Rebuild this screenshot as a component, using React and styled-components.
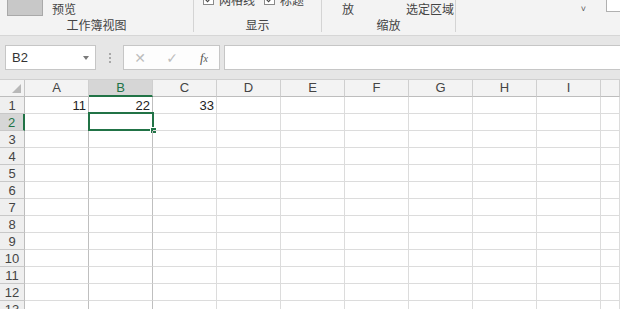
import React from "react";
import styled, { createGlobalStyle } from "styled-components";

const Global = createGlobalStyle`
  html, body { margin: 0; padding: 0; }
  body { font-family: "Liberation Sans", "Noto Sans CJK SC", sans-serif; background: #e6e6e6; }
  * { box-sizing: border-box; }
`;

const Page = styled.div`
  width: 100%;
  height: 309px;
  overflow: hidden;
  display: flex;
  flex-direction: column;
`;

const Ribbon = styled.div`
  height: 36px;
  flex: none;
  display: flex;
  background: #f3f3f3;
  border-bottom: 1px solid #d6d6d6;
  overflow: hidden;
  font-family: "Noto Sans CJK SC", sans-serif;
  font-size: 12px;
  color: #444;
`;

const Group = styled.div`
  width: ${(p) => p.$w}px;
  flex: none;
  display: flex;
  flex-direction: column;
  border-right: 1px solid #d4d4d4;
  height: 32px;
`;

const GroupBody = styled.div`
  height: 17px;
  display: flex;
  align-items: center;
  padding-left: ${(p) => p.$pl || 0}px;
  gap: ${(p) => p.$gap || 0}px;
  margin-top: ${(p) => p.$mt || 0}px;
`;

const GroupLabel = styled.div`
  height: 15px;
  line-height: 15px;
  text-align: center;
  margin-top: auto;
`;

const PreviewTile = styled.div`
  width: 36px;
  height: 40px;
  margin-top: -25px;
  background: #c8c8c8;
  border: 1px solid #a9a9a9;
  flex: none;
`;

const RibbonText = styled.span`
  line-height: 14px;
  white-space: nowrap;
`;

const CheckItem = styled.div`
  display: flex;
  align-items: center;
  gap: 5px;
`;

const CheckBox = styled.span`
  width: 11px;
  height: 11px;
  border: 1px solid #8a8a8a;
  background: #fff;
  display: inline-flex;
  align-items: center;
  justify-content: center;
  color: #444;
`;

const RibbonRest = styled.div`
  flex: 1;
  display: flex;
  justify-content: flex-end;
  align-items: flex-start;
`;

const Chevron = styled.span`
  margin-top: 2px;
  margin-right: 20px;
  font-size: 9px;
  color: #555;
`;

const CornerBox = styled.div`
  width: 14px;
  height: 12px;
  background: #fff;
  border: 1px solid #b0b0b0;
  border-top: none;
  border-right: none;
`;

const FormulaArea = styled.div`
  height: 43px;
  flex: none;
  display: flex;
  align-items: flex-start;
  padding-top: 9px;
  padding-left: 5px;
  background: #e6e6e6;
`;

const NameBox = styled.div`
  width: 91px;
  height: 25px;
  background: #fff;
  border: 1px solid #c6c6c6;
  display: flex;
  align-items: center;
  justify-content: space-between;
  padding: 0 6px;
  font-size: 13px;
  color: #333;
`;

const DropTri = styled.span`
  width: 0;
  height: 0;
  border-left: 3.5px solid transparent;
  border-right: 3.5px solid transparent;
  border-top: 4px solid #7a7a7a;
`;

const Dots = styled.div`
  width: 27px;
  height: 25px;
  display: flex;
  flex-direction: column;
  align-items: center;
  justify-content: center;
  gap: 2px;
`;

const Dot = styled.span`
  width: 2px;
  height: 2px;
  background: #a8a8a8;
`;

const FxBox = styled.div`
  width: 97px;
  height: 25px;
  background: #fdfdfd;
  border: 1px solid #c6c6c6;
  display: flex;
  align-items: center;
  padding-left: 4px;
  gap: 8px;
`;

const FxBtn = styled.span`
  color: ${(p) => p.$c || "#bdbdbd"};
  font-size: ${(p) => p.$s || 14}px;
  width: 24px;
  text-align: center;
  font-family: ${(p) => (p.$serif ? '"Liberation Serif", serif' : '"DejaVu Sans", sans-serif')};
`;

const FormulaInput = styled.div`
  flex: 1;
  height: 25px;
  margin-left: 4px;
  background: #fff;
  border: 1px solid #c6c6c6;
  border-right: none;
`;

const Sheet = styled.div`
  display: grid;
  grid-template-columns: 25px repeat(9, 64px) 1fr;
  grid-auto-rows: 17px;
  background: #fff;
  border-top: 1px solid #d0d0d0;
  font-size: 13px;
  color: #222;
`;

const Corner = styled.div`
  background: #f3f3f3;
  border-right: 1px solid #c6c6c6;
  border-bottom: 1px solid #bdbdbd;
  display: flex;
  align-items: flex-end;
  justify-content: flex-end;
  padding: 0 3px 3px 0;
`;

const CornerTri = styled.span`
  width: 0;
  height: 0;
  border-left: 9px solid transparent;
  border-bottom: 9px solid #b8b8b8;
`;

const ColHead = styled.div`
  background: ${(p) => (p.$sel ? "#d6d6d6" : "#f3f3f3")};
  color: ${(p) => (p.$sel ? "#217346" : "#444")};
  border-right: 1px solid #cfcfcf;
  border-bottom: ${(p) => (p.$sel ? "2px solid #217346" : "1px solid #bdbdbd")};
  text-align: center;
  line-height: 16px;
`;

const RowHead = styled.div`
  background: ${(p) => (p.$sel ? "#d6d6d6" : "#efefef")};
  color: ${(p) => (p.$sel ? "#217346" : "#444")};
  border-right: ${(p) => (p.$sel ? "2px solid #217346" : "1px solid #bdbdbd")};
  border-bottom: 1px solid #c8c8c8;
  text-align: center;
  line-height: 17px;
`;

const Cell = styled.div`
  position: relative;
  border-right: 1px solid ${(p) => (p.$dark ? "#bfbfbf" : "#dcdcdc")};
  border-bottom: 1px solid #dcdcdc;
  text-align: right;
  padding-right: 2px;
  line-height: 17px;
  white-space: nowrap;
`;

const Selection = styled.div`
  position: absolute;
  left: -1px;
  top: -2px;
  right: -2px;
  bottom: -1px;
  border: 2px solid #217346;
  pointer-events: none;
`;

const Handle = styled.span`
  position: absolute;
  right: -5px;
  bottom: -5px;
  width: 7px;
  height: 7px;
  background: #217346;
  border: 1px solid #fff;
`;

const COLS = ["A", "B", "C", "D", "E", "F", "G", "H", "I", ""];
const DATA = { "1A": "11", "1B": "22", "1C": "33" };

const Tick = () => (
  <svg width="9" height="9" viewBox="0 0 9 9">
    <path d="M1.5 4.6 L3.6 6.7 L7.6 2.2" fill="none" stroke="#444" strokeWidth="1.1" />
  </svg>
);

export default function App() {
  const rows = Array.from({ length: 13 }, (_, i) => i + 1);
  return (
    <Page>
      <Global />
      <Ribbon>
        <Group $w={194}>
          <GroupBody $pl={7} $gap={9}>
            <PreviewTile />
            <RibbonText>预览</RibbonText>
          </GroupBody>
          <GroupLabel>工作簿视图</GroupLabel>
        </Group>
        <Group $w={128}>
          <GroupBody $pl={9} $gap={9} $mt={-9}>
            <CheckItem>
              <CheckBox>
                <Tick />
              </CheckBox>
              <RibbonText>网格线</RibbonText>
            </CheckItem>
            <CheckItem>
              <CheckBox>
                <Tick />
              </CheckBox>
              <RibbonText>标题</RibbonText>
            </CheckItem>
          </GroupBody>
          <GroupLabel>显示</GroupLabel>
        </Group>
        <Group $w={134}>
          <GroupBody $pl={20} $gap={52}>
            <RibbonText>放</RibbonText>
            <RibbonText>选定区域</RibbonText>
          </GroupBody>
          <GroupLabel>缩放</GroupLabel>
        </Group>
        <RibbonRest>
          <Chevron>˅</Chevron>
          <CornerBox />
        </RibbonRest>
      </Ribbon>
      <FormulaArea>
        <NameBox>
          <span>B2</span>
          <DropTri />
        </NameBox>
        <Dots>
          <Dot />
          <Dot />
          <Dot />
        </Dots>
        <FxBox>
          <FxBtn>✕</FxBtn>
          <FxBtn>✓</FxBtn>
          <FxBtn $c="#555" $s={13} $serif>
            <i>f</i>
            <i style={{ fontSize: 10 }}>x</i>
          </FxBtn>
        </FxBox>
        <FormulaInput />
      </FormulaArea>
      <Sheet>
        <Corner>
          <CornerTri />
        </Corner>
        {COLS.map((c, i) => (
          <ColHead key={"h" + i} $sel={c === "B"}>
            {c}
          </ColHead>
        ))}
        {rows.map((r) => (
          <React.Fragment key={r}>
            <RowHead $sel={r === 2}>{r}</RowHead>
            {COLS.map((c, i) => (
              <Cell key={r + "-" + i} $dark={c === "A" || c === "B"}>
                {DATA[r + c] || ""}
                {r === 2 && c === "B" && (
                  <Selection>
                    <Handle />
                  </Selection>
                )}
              </Cell>
            ))}
          </React.Fragment>
        ))}
      </Sheet>
    </Page>
  );
}
